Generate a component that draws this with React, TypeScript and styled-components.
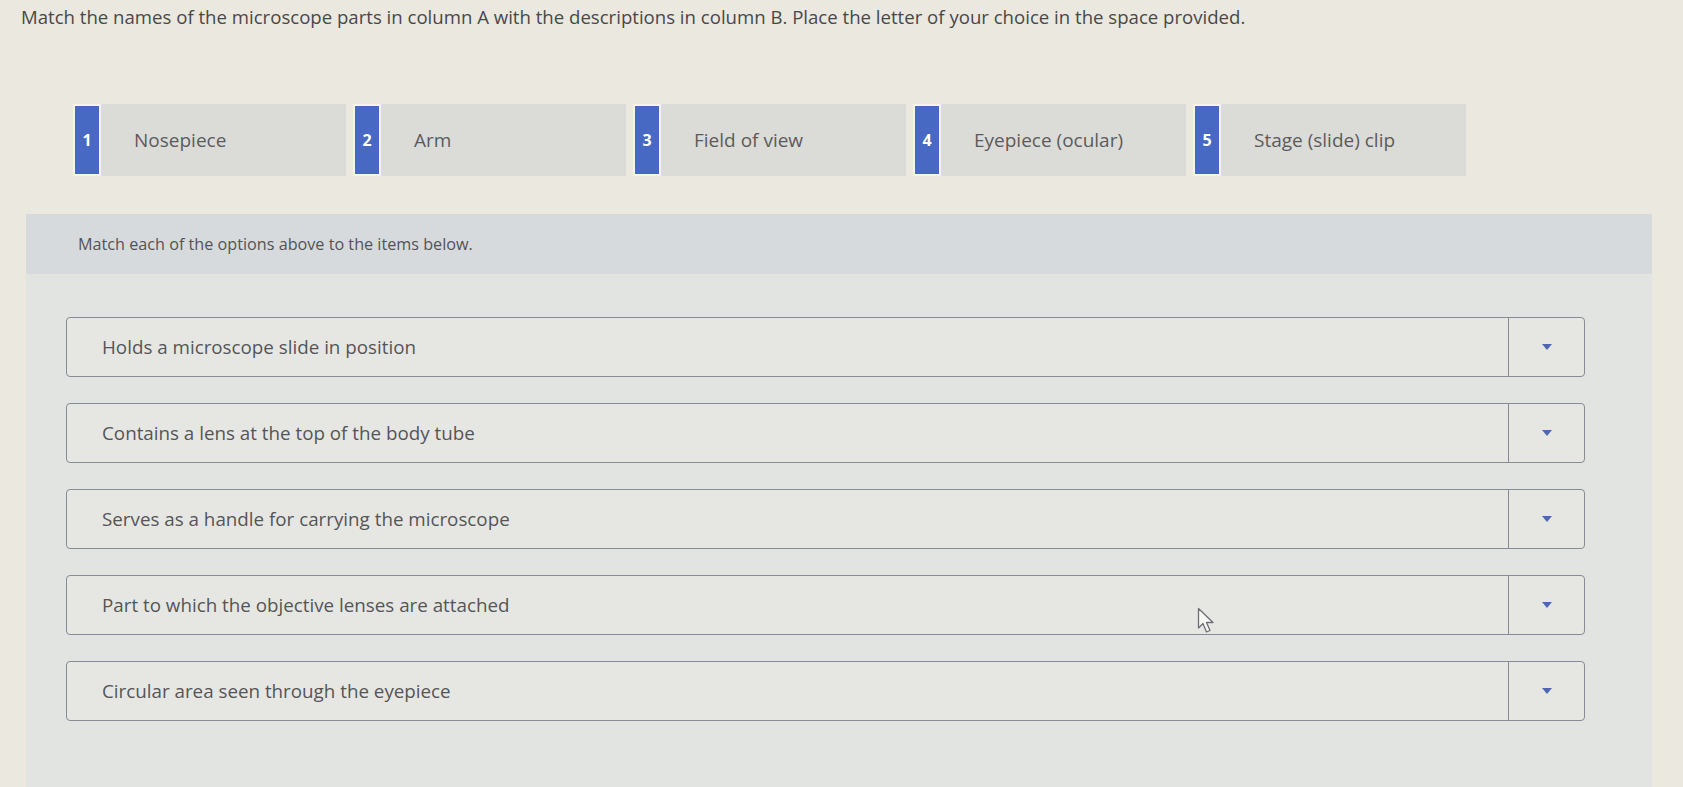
import styled, { createGlobalStyle } from 'styled-components'

const GlobalStyle = createGlobalStyle`
  html, body {
    margin: 0;
    padding: 0;
    background: #ebe8df;
  }
  body {
    font-family: 'Open Sans', Lato, Arial, sans-serif;
  }
`

const Page = styled.div`
  position: relative;
  min-height: 787px;
  padding-top: 7px;
  box-sizing: border-box;
  background: #ebe8df;
  overflow: hidden;
`

const Title = styled.p`
  margin: 0 0 0 21px;
  font-size: 18.6px;
  line-height: 20px;
  color: #48484b;
`

const OptionRow = styled.div`
  display: flex;
  gap: 7px;
  margin: 77px 0 0 73px;
`

const OptionTile = styled.div`
  display: flex;
  align-items: center;
  width: 273px;
  height: 72px;
  background: #dbdbd8;
`

const Badge = styled.div`
  display: flex;
  align-items: center;
  justify-content: center;
  align-self: stretch;
  width: 24px;
  background: #4769c4;
  border: 2px solid #f4f3ef;
  color: #ffffff;
  font-weight: 700;
  font-size: 16px;
`

const OptionLabel = styled.span`
  margin-left: 33px;
  font-size: 19px;
  color: #5b5b5d;
`

const Panel = styled.div`
  margin: 38px 31px 0 26px;
  min-height: 573px;
  background: #e2e4e2;
`

const PanelHeader = styled.div`
  display: flex;
  align-items: center;
  height: 60px;
  padding-left: 52px;
  background: #d7dadd;
  font-size: 16.2px;
  color: #535355;
`

const ItemList = styled.div`
  display: flex;
  flex-direction: column;
  gap: 26px;
  padding: 43px 67px 40px 40px;
`

const ItemRow = styled.div`
  display: flex;
  height: 60px;
  box-sizing: border-box;
  border: 1.5px solid #868b95;
  border-radius: 4px;
  background: #e6e7e3;
`

const ItemText = styled.div`
  flex: 1;
  display: flex;
  align-items: center;
  padding-left: 35px;
  font-size: 18.8px;
  color: #555558;
`

const DropButton = styled.div`
  display: flex;
  align-items: center;
  justify-content: center;
  width: 75px;
  border-left: 1.5px solid #868b95;
`

const Caret = styled.span`
  width: 0;
  height: 0;
  border-left: 5px solid transparent;
  border-right: 5px solid transparent;
  border-top: 6px solid #4f68ad;
`

const Cursor = styled.svg`
  position: absolute;
  left: 1197px;
  top: 607px;
`

const options = ['Nosepiece', 'Arm', 'Field of view', 'Eyepiece (ocular)', 'Stage (slide) clip']

const items = [
  'Holds a microscope slide in position',
  'Contains a lens at the top of the body tube',
  'Serves as a handle for carrying the microscope',
  'Part to which the objective lenses are attached',
  'Circular area seen through the eyepiece',
]

export default function App() {
  return (
    <Page>
      <GlobalStyle />
      <Title>
        Match the names of the microscope parts in column A with the descriptions in column B. Place
        the letter of your choice in the space provided.
      </Title>
      <OptionRow>
        {options.map((label, i) => (
          <OptionTile key={label}>
            <Badge>{i + 1}</Badge>
            <OptionLabel>{label}</OptionLabel>
          </OptionTile>
        ))}
      </OptionRow>
      <Panel>
        <PanelHeader>Match each of the options above to the items below.</PanelHeader>
        <ItemList>
          {items.map((text) => (
            <ItemRow key={text}>
              <ItemText>{text}</ItemText>
              <DropButton>
                <Caret />
              </DropButton>
            </ItemRow>
          ))}
        </ItemList>
      </Panel>
      <Cursor width="20" height="28" viewBox="0 0 20 28">
        <path
          d="M1.5 1.5 L1.5 21 L6 16.5 L9.5 25 L13 23.5 L9.5 15.5 L16 15.5 Z"
          fill="#f7f7f4"
          stroke="#6f6f78"
          strokeWidth="1.3"
          strokeLinejoin="round"
        />
      </Cursor>
    </Page>
  )
}
